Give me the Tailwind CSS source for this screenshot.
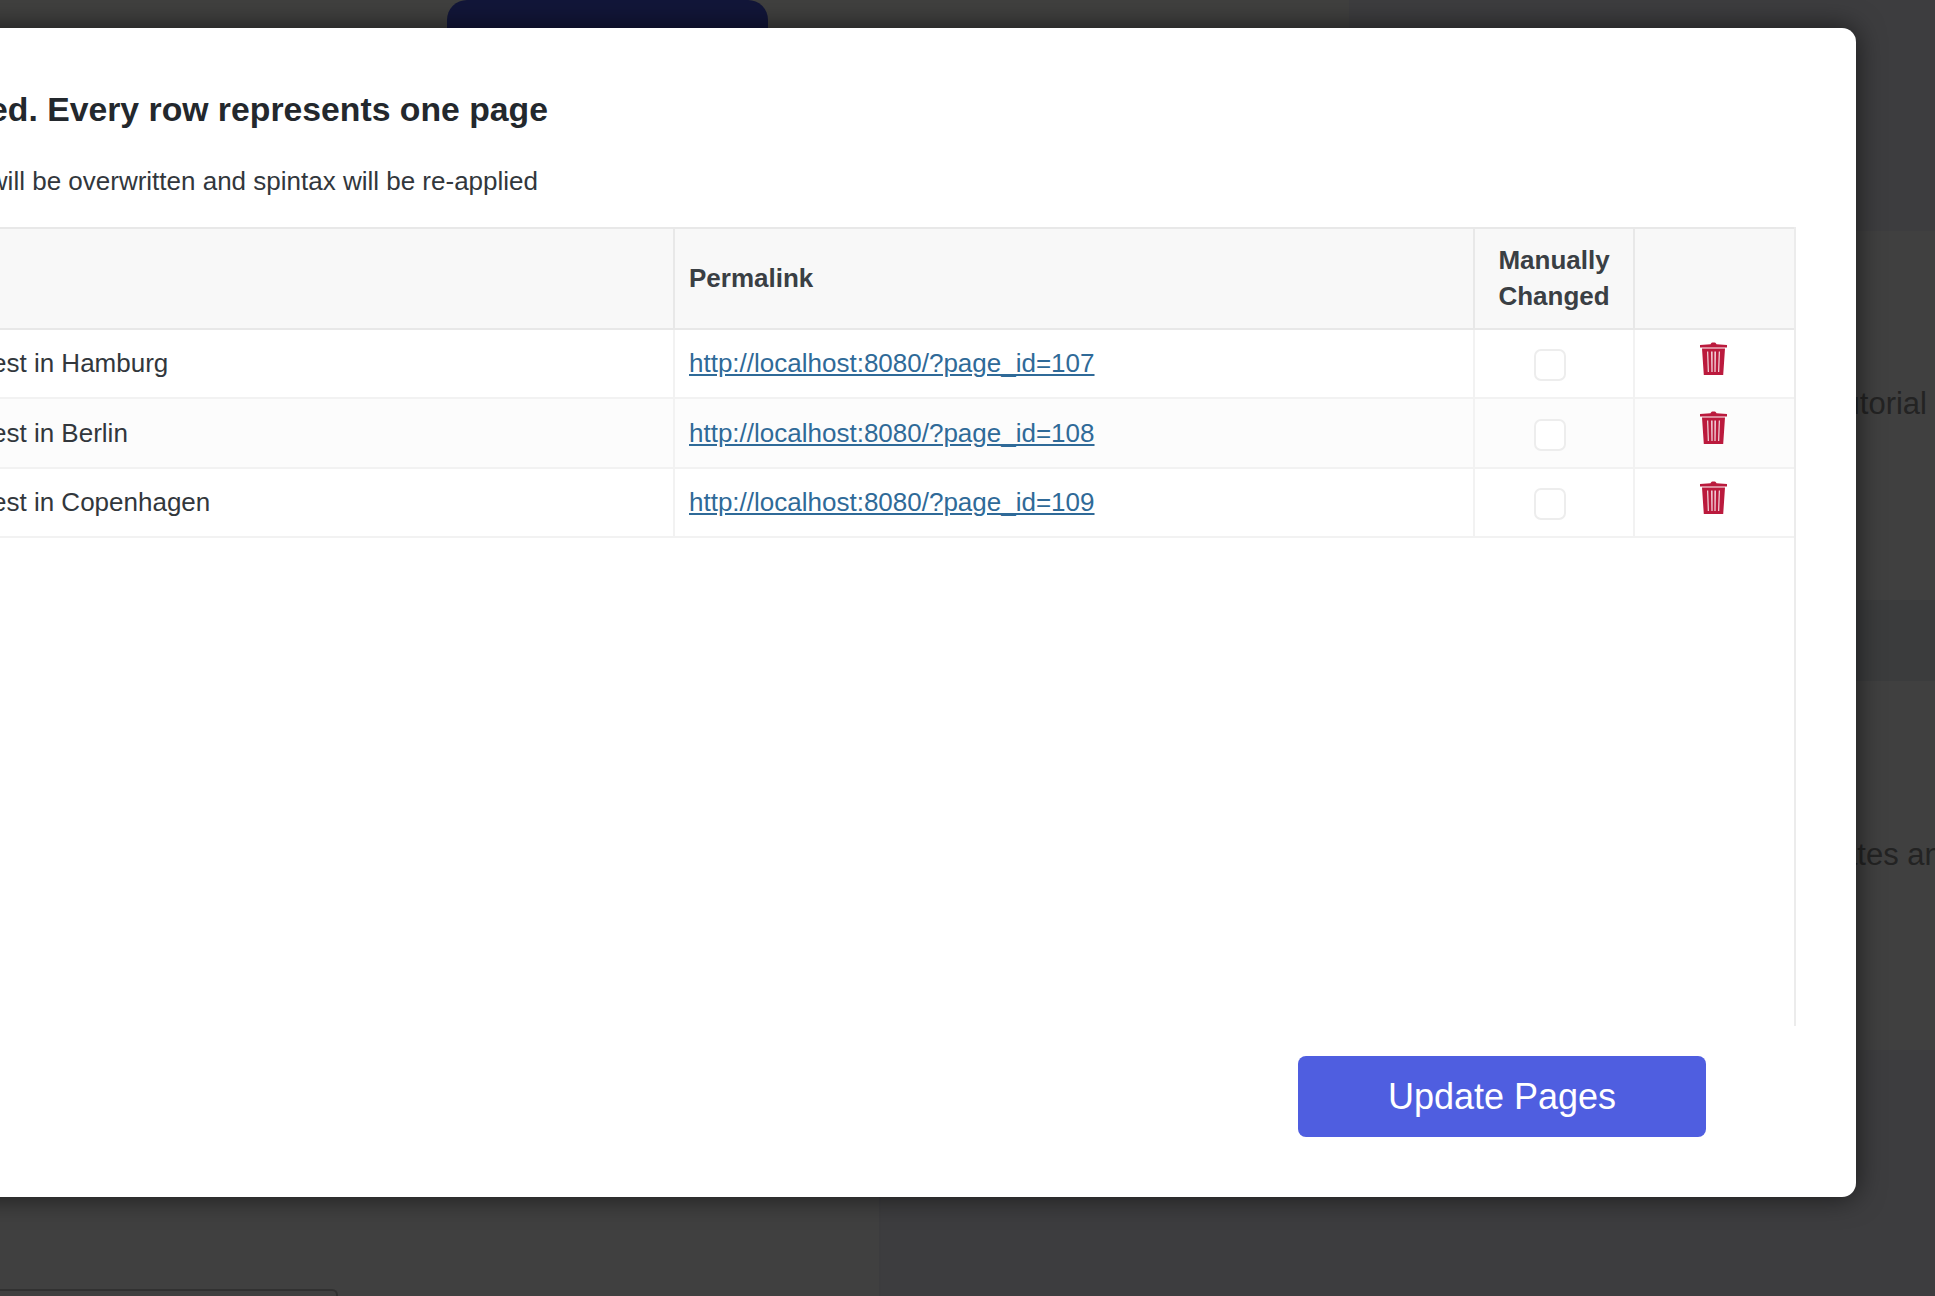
<!DOCTYPE html>
<html lang="en">
<head>
    <meta charset="UTF-8">
    <meta name="viewport" content="width=device-width, initial-scale=1.0">
    <script src="https://cdn.jsdelivr.net/npm/@tailwindcss/browser@4"></script>
    <title>Update Pages</title>
</head>
<body class="relative w-[1935px] h-[1296px] overflow-hidden bg-[#404040] font-['Liberation_Sans',Arial,sans-serif]">

    <!-- Dimmed page behind the modal -->
    <div class="flex h-[231px]">
        <div class="w-[1349px] bg-[#40403f] pl-[447px]">
            <div class="w-[321px] h-[60px] rounded-t-[20px] bg-[#121639]"></div>
        </div>
        <div class="flex-1 bg-[#3d3d3f]"></div>
    </div>
    <div class="flex h-[1065px]">
        <div class="w-[879px] flex flex-col justify-end">
            <div class="w-[338px] h-[7px] rounded-tr-md border-t-2 border-r-2 border-[#313131]"></div>
        </div>
        <div class="flex-1 flex flex-col border-l-2 border-[#3c3c3e] text-[31px] text-[#232323] whitespace-nowrap">
            <div class="h-[369px] flex items-center justify-end pr-[8px] pb-[22px]">Watch the video tutorial</div>
            <div class="h-[81px] bg-[#3b3c3d]"></div>
            <div class="h-[369px] flex items-center justify-end -mr-[24px] pb-[21px]">Create templates and</div>
            <div class="flex-1 bg-[#3d3d3f]"></div>
        </div>
    </div>

    <!-- Modal -->
    <div class="absolute left-[-99px] top-[28px] w-[1955px] h-[1169px] bg-white rounded-r-[14px] shadow-[0_0_28px_rgba(0,0,0,0.6)] pt-[61px] pl-[60px] pr-[60px] text-[#32373c] whitespace-nowrap">
        <div class="w-[587px] flex justify-end">
            <h2 class="text-[33.75px] leading-[40px] font-bold text-[#23282d]">Your pages have been created. Every row represents one page</h2>
        </div>
        <div class="w-[577px] flex justify-end mt-[37px]">
            <p class="text-[26px] leading-[30px]">Manually changed pages will be overwritten and spintax will be re-applied</p>
        </div>

        <div class="mt-[31px] h-[799px] border-r-2 border-[#ececec]">
            <table class="w-full table-fixed text-[26px]">
                <thead>
                    <tr class="h-[101px] bg-[#f8f8f8] leading-[36px] text-left text-[#3a3f44]">
                        <th class="w-[712px] border-2 border-[#e8e8e8] pl-[17px] font-bold"></th>
                        <th class="w-[800px] border-2 border-[#e8e8e8] px-[14px] pb-[2px] font-bold">Permalink</th>
                        <th class="w-[160px] border-2 border-[#e8e8e8] pb-[2px] text-center font-bold whitespace-normal">Manually Changed</th>
                        <th class="border-y-2 border-[#e8e8e8]"></th>
                    </tr>
                </thead>
                <tbody>
                    <tr class="h-[69px]">
                        <td class="border-r-2 border-b-2 border-[#f2f2f2] pl-[17px]">Test in Hamburg</td>
                        <td class="border-r-2 border-b-2 border-[#f2f2f2] px-[14px]"><a href="#" class="text-[#2f6a98] underline">http://localhost:8080/?page_id=107</a></td>
                        <td class="border-r-2 border-b-2 border-[#f2f2f2] text-center pr-[8px]"><span class="inline-block align-middle w-[32px] h-[32px] rounded-[7px] border-2 border-[#ededed] bg-white"></span></td>
                        <td class="border-b-2 border-[#f2f2f2] text-center pb-[13px] pr-[2px]">
                            <svg class="inline-block align-middle" width="27" height="33" viewBox="0 0 27 33" fill="#bb1a3d">
                                <path d="M10.5 2.2C11 .8 12 .4 13.5.4s2.5.4 3 1.8L27 3v2.600H0V3z"/>
                                <path fill-rule="evenodd" d="M2 6.500h23L23.200 33H3.800zM7.200 9.500l.6 20.500h1L8.200 9.500zM11.200 9.500l.3 20.500h1V9.500zM14.500 9.500V30h1l.3-20.500zM18.800 9.500 18.200 30h1l.6-20.500z"/>
                            </svg>
                        </td>
                    </tr>
                    <tr class="h-[70px] bg-[#fcfcfc]">
                        <td class="border-r-2 border-b-2 border-[#f2f2f2] pl-[17px]">Test in Berlin</td>
                        <td class="border-r-2 border-b-2 border-[#f2f2f2] px-[14px]"><a href="#" class="text-[#2f6a98] underline">http://localhost:8080/?page_id=108</a></td>
                        <td class="border-r-2 border-b-2 border-[#f2f2f2] text-center pr-[8px]"><span class="inline-block align-middle w-[32px] h-[32px] rounded-[7px] border-2 border-[#ededed] bg-white"></span></td>
                        <td class="border-b-2 border-[#f2f2f2] text-center pb-[14px] pr-[2px]">
                            <svg class="inline-block align-middle" width="27" height="33" viewBox="0 0 27 33" fill="#bb1a3d">
                                <path d="M10.5 2.2C11 .8 12 .4 13.5.4s2.5.4 3 1.8L27 3v2.600H0V3z"/>
                                <path fill-rule="evenodd" d="M2 6.500h23L23.200 33H3.800zM7.200 9.500l.6 20.500h1L8.200 9.500zM11.200 9.500l.3 20.500h1V9.500zM14.500 9.500V30h1l.3-20.500zM18.800 9.500 18.200 30h1l.6-20.500z"/>
                            </svg>
                        </td>
                    </tr>
                    <tr class="h-[69px]">
                        <td class="border-r-2 border-b-2 border-[#f2f2f2] pl-[17px]">Test in Copenhagen</td>
                        <td class="border-r-2 border-b-2 border-[#f2f2f2] px-[14px]"><a href="#" class="text-[#2f6a98] underline">http://localhost:8080/?page_id=109</a></td>
                        <td class="border-r-2 border-b-2 border-[#f2f2f2] text-center pr-[8px]"><span class="inline-block align-middle w-[32px] h-[32px] rounded-[7px] border-2 border-[#ededed] bg-white"></span></td>
                        <td class="border-b-2 border-[#f2f2f2] text-center pb-[13px] pr-[2px]">
                            <svg class="inline-block align-middle" width="27" height="33" viewBox="0 0 27 33" fill="#bb1a3d">
                                <path d="M10.5 2.2C11 .8 12 .4 13.5.4s2.5.4 3 1.8L27 3v2.600H0V3z"/>
                                <path fill-rule="evenodd" d="M2 6.500h23L23.200 33H3.800zM7.200 9.500l.6 20.500h1L8.200 9.500zM11.200 9.500l.3 20.500h1V9.500zM14.500 9.500V30h1l.3-20.500zM18.800 9.500 18.200 30h1l.6-20.500z"/>
                            </svg>
                        </td>
                    </tr>
                </tbody>
            </table>
        </div>

        <div class="flex justify-end mt-[30px] pr-[90px]">
            <button class="w-[408px] h-[81px] rounded-[8px] bg-[#4f5ee0] text-white text-[36px]">Update Pages</button>
        </div>
    </div>

</body>
</html>
